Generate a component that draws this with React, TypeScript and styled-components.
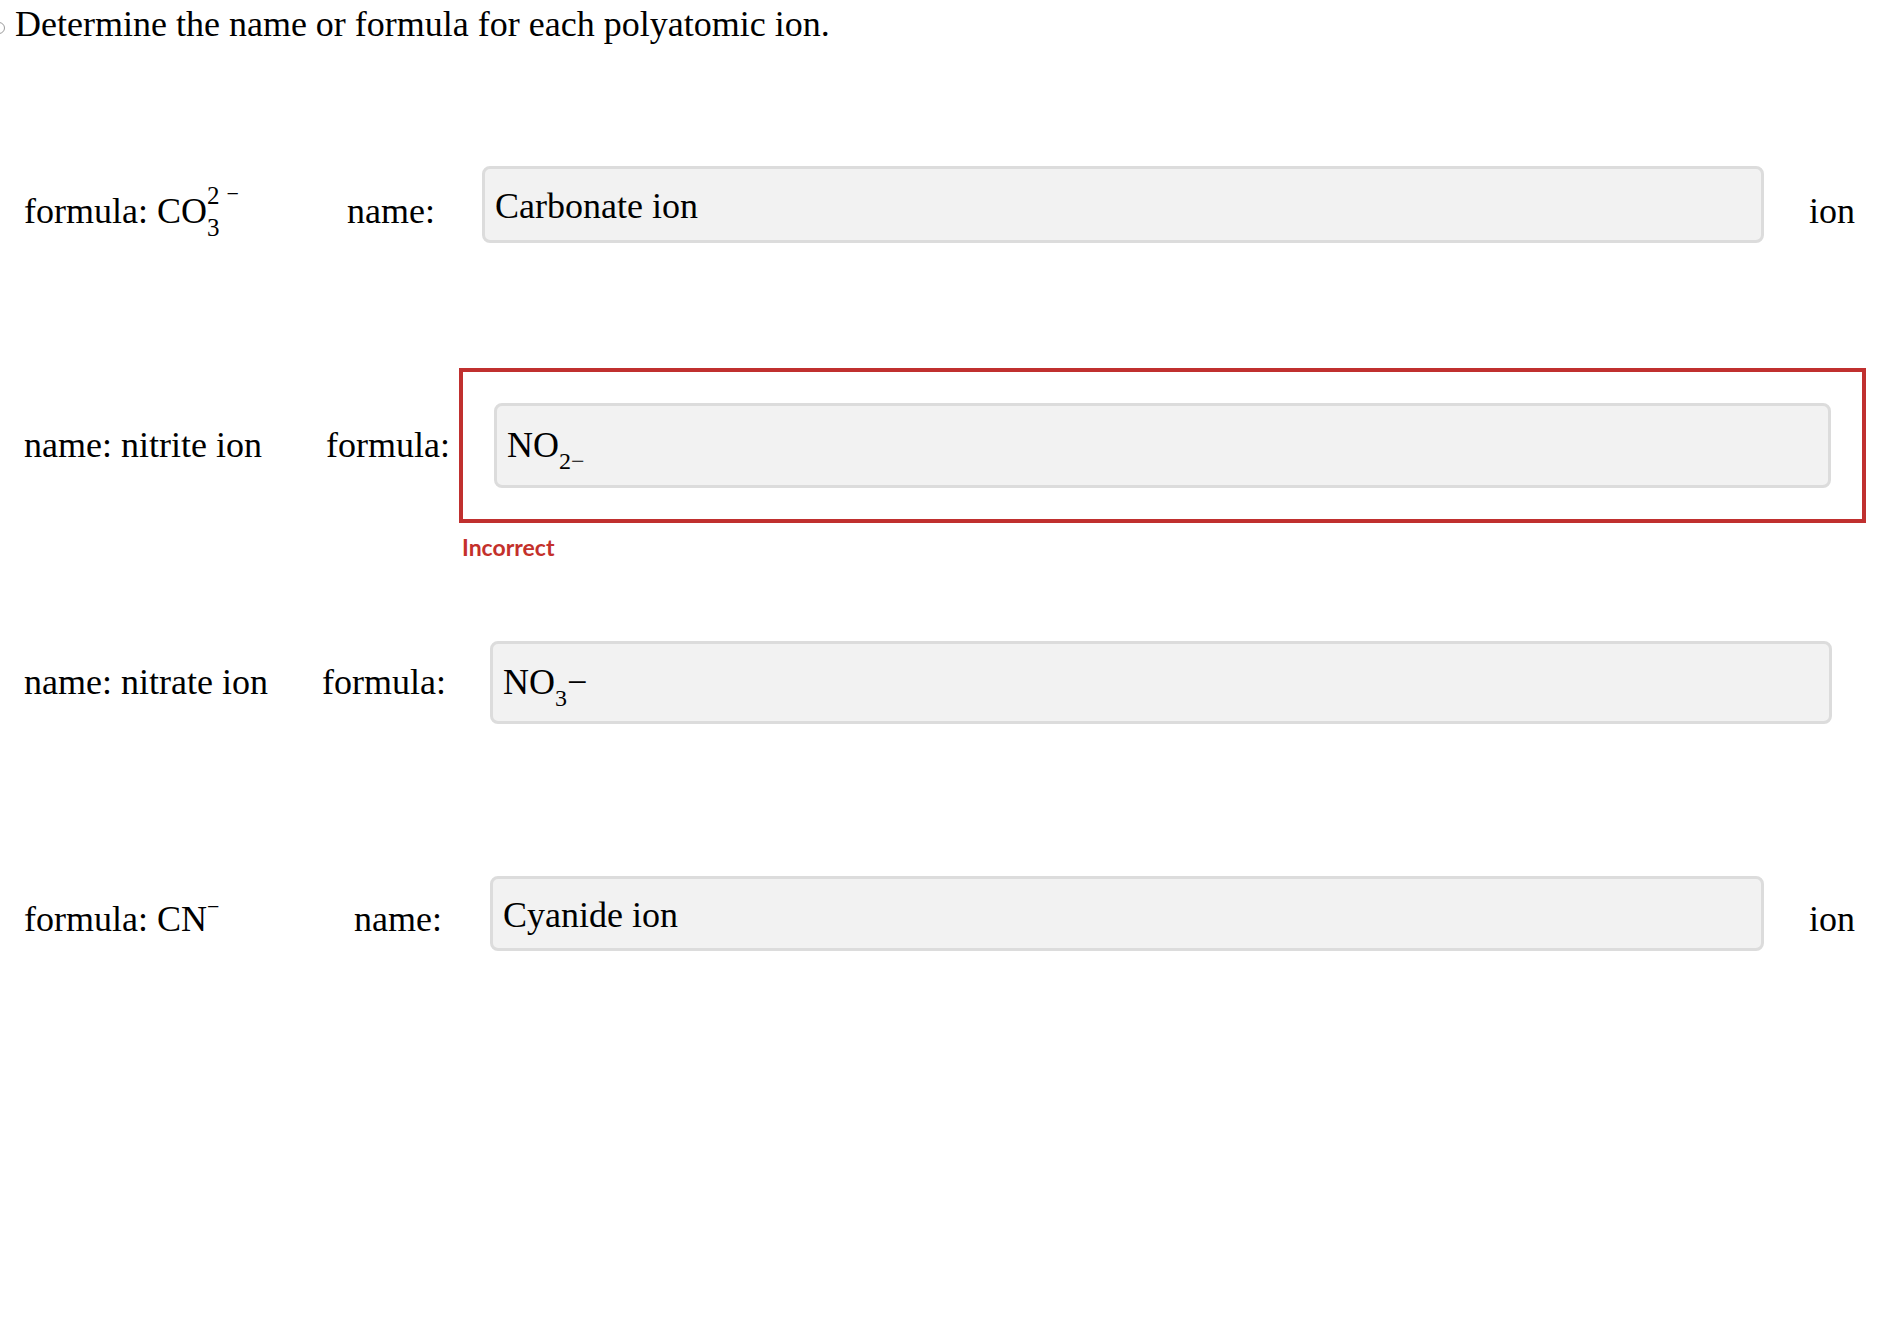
import React from "react";
import styled, { createGlobalStyle } from "styled-components";

const GlobalStyle = createGlobalStyle`
    html, body {
        margin: 0;
        padding: 0;
        background: #ffffff;
    }

    body {
        font-family: "Liberation Serif", "Times New Roman", serif;
        color: #000000;
    }
`;

const Page = styled.main`
    display: flex;
    flex-direction: column;
    width: 1877px;
`;

const Title = styled.h1`
    margin: 0;
    font-size: 36px;
    font-weight: 400;
    line-height: 48px;
    white-space: nowrap;
`;

const Marker = styled.span`
    display: inline-block;
    box-sizing: border-box;
    width: 12px;
    height: 12px;
    margin-left: -7px;
    margin-right: 10px;
    border: 1.5px solid #9b9b9b;
    border-radius: 50%;
    vertical-align: 2px;
`;

const Row = styled.div<{ $cols: string; $gap: number }>`
    display: grid;
    grid-template-columns: ${p => p.$cols};
    align-items: center;
    margin-top: ${p => p.$gap}px;
    padding-left: 24px;
`;

const Label = styled.span<{ $drop?: number }>`
    padding-top: ${p => p.$drop ?? 0}px;
    font-size: 36px;
    line-height: 41px;
    white-space: nowrap;
`;

const Suffix = styled(Label)`
    padding-left: 45px;
`;

const Field = styled.div<{ $height: number; $drop?: number }>`
    box-sizing: border-box;
    height: ${p => p.$height}px;
    display: flex;
    align-items: center;
    padding: ${p => p.$drop ?? 0}px 10px 0;
    border: 3px solid #dcdcdc;
    border-radius: 8px;
    background: #f2f2f2;
`;

const FieldText = styled.span`
    font-size: 36px;
    line-height: 41px;
    white-space: nowrap;
`;

const Sub = styled.span<{ $size?: number; $drop?: number }>`
    font-size: ${p => p.$size ?? 24}px;
    line-height: 0;
    vertical-align: ${p => -(p.$drop ?? 12)}px;
`;

const Sup = styled.span<{ $raise: number; $size?: number; $overlap?: number }>`
    margin-left: ${p => -(p.$overlap ?? 0)}px;
    font-size: ${p => p.$size ?? 24}px;
    line-height: 0;
    vertical-align: ${p => p.$raise}px;
`;

const Charge = styled.span`
    margin-left: 7px;
    font-size: 22px;
    vertical-align: 3px;
`;

const Feedback = styled.div`
    padding: 31px;
    border: 4px solid #c0302f;
`;

const Hint = styled.div`
    grid-column: 3;
    margin-top: 11px;
    padding-left: 3px;
    font-family: Lato, "Open Sans", sans-serif;
    font-size: 23px;
    font-weight: 700;
    line-height: 27px;
    color: #c4302b;
`;

export default function App() {
    return <Page>
        <GlobalStyle />
        <Title>
            <Marker />
            Determine the name or formula for each polyatomic ion.
        </Title>

        <Row $cols="323px 135px 1282px auto" $gap={118}>
            <Label $drop={14}>
                formula: CO<Sub $size={25} $drop={13}>3</Sub><Sup $raise={19} $size={25} $overlap={12.5}>2<Charge>−</Charge></Sup>
            </Label>
            <Label $drop={14}>name:</Label>
            <Field $height={77} $drop={4}>
                <FieldText>Carbonate ion</FieldText>
            </Field>
            <Suffix $drop={14}>ion</Suffix>
        </Row>

        <Row $cols="302px 133px 1407px" $gap={125}>
            <Label>name: nitrite ion</Label>
            <Label>formula:</Label>
            <Feedback>
                <Field $height={85}>
                    <FieldText>NO<Sub>2−</Sub></FieldText>
                </Field>
            </Feedback>
            <Hint>Incorrect</Hint>
        </Row>

        <Row $cols="298px 168px 1342px" $gap={80}>
            <Label>name: nitrate ion</Label>
            <Label>formula:</Label>
            <Field $height={83}>
                <FieldText>NO<Sub>3</Sub>−</FieldText>
            </Field>
        </Row>

        <Row $cols="330px 136px 1274px auto" $gap={152}>
            <Label $drop={11}>
                formula: CN<Sup $raise={17} $size={22}>−</Sup>
            </Label>
            <Label $drop={11}>name:</Label>
            <Field $height={75} $drop={4}>
                <FieldText>Cyanide ion</FieldText>
            </Field>
            <Suffix $drop={11}>ion</Suffix>
        </Row>
    </Page>;
}
